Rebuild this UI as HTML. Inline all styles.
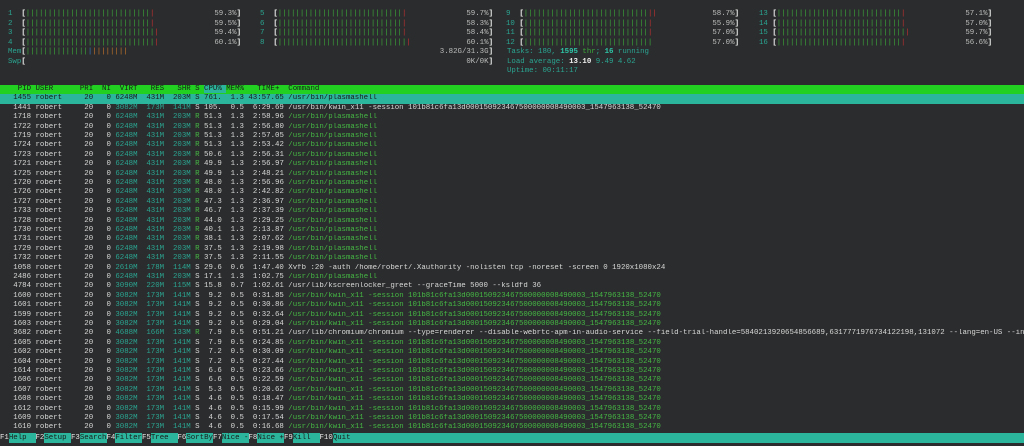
<!DOCTYPE html>
<html><head><meta charset="utf-8"><style>
html,body{margin:0;padding:0;}
body{width:1024px;height:446px;background:#2b2c2d;overflow:hidden;position:relative;font-family:"Liberation Mono",monospace;font-size:7.4px;color:#d8d8d8;}
.m{position:absolute;width:233px;height:9.5px;line-height:9.5px;white-space:pre;}
.m .p{position:absolute;right:0;top:0;color:#bdbdbd;}
.b{color:#f0f0f0;font-weight:bold;}
.l{color:#2aa592;}
.g{color:#3bab3b;}
.r{color:#c43030;}
.bl{color:#3a78c8;}
.o{color:#c8772a;}
.t{color:#2aa592;}
.gc{color:#45b845;}
.k{color:#f0f0f0;font-weight:bold;}
#tbl{position:absolute;left:0;top:85px;width:1024px;height:348px;overflow:hidden;}
#tbl div{position:absolute;left:0;width:1024px;height:9.4px;line-height:9.4px;white-space:pre;overflow:hidden;}
.hd{background:#22d022;color:#1a1a1a;}
.hd .s{background:#2bb59c;}
.sel{background:#2bb59c;color:#1a1a1a;}
#ft{position:absolute;left:0;top:433px;width:1024px;height:10px;line-height:10px;white-space:pre;display:flex;overflow:hidden;}
#ft .f{color:#e8e8e8;}
#ft .c{background:#2bb59c;color:#1a1a1a;}
</style></head><body>

<div class="m" style="left:8px;top:10.25px"><span class="l">1  </span><span class="b">[</span><span class="g">||||||||||||||||||||||||||||</span><span class="r">|</span><span class="p">59.3%<span class="b">]</span></span></div>
<div class="m" style="left:8px;top:19.75px"><span class="l">2  </span><span class="b">[</span><span class="g">||||||||||||||||||||||||||||</span><span class="r">|</span><span class="p">59.5%<span class="b">]</span></span></div>
<div class="m" style="left:8px;top:29.25px"><span class="l">3  </span><span class="b">[</span><span class="g">|||||||||||||||||||||||||||||</span><span class="r">|</span><span class="p">59.4%<span class="b">]</span></span></div>
<div class="m" style="left:8px;top:38.75px"><span class="l">4  </span><span class="b">[</span><span class="g">|||||||||||||||||||||||||||||</span><span class="r">|</span><span class="p">60.1%<span class="b">]</span></span></div>

<div class="m" style="left:260px;top:10.25px"><span class="l">5  </span><span class="b">[</span><span class="g">||||||||||||||||||||||||||||</span><span class="r">|</span><span class="p">59.7%<span class="b">]</span></span></div>
<div class="m" style="left:260px;top:19.75px"><span class="l">6  </span><span class="b">[</span><span class="g">||||||||||||||||||||||||||||</span><span class="r">|</span><span class="p">58.3%<span class="b">]</span></span></div>
<div class="m" style="left:260px;top:29.25px"><span class="l">7  </span><span class="b">[</span><span class="g">||||||||||||||||||||||||||||</span><span class="r">|</span><span class="p">58.4%<span class="b">]</span></span></div>
<div class="m" style="left:260px;top:38.75px"><span class="l">8  </span><span class="b">[</span><span class="g">|||||||||||||||||||||||||||||</span><span class="r">|</span><span class="p">60.1%<span class="b">]</span></span></div>

<div class="m" style="left:506px;top:10.25px"><span class="l">9  </span><span class="b">[</span><span class="g">||||||||||||||||||||||||||||</span><span class="r">||</span><span class="p">58.7%<span class="b">]</span></span></div>
<div class="m" style="left:506px;top:19.75px"><span class="l">10 </span><span class="b">[</span><span class="g">||||||||||||||||||||||||||||</span><span class="r">|</span><span class="p">55.9%<span class="b">]</span></span></div>
<div class="m" style="left:506px;top:29.25px"><span class="l">11 </span><span class="b">[</span><span class="g">||||||||||||||||||||||||||||</span><span class="r">|</span><span class="p">57.0%<span class="b">]</span></span></div>
<div class="m" style="left:506px;top:38.75px"><span class="l">12 </span><span class="b">[</span><span class="g">|||||||||||||||||||||||||||||</span><span class="p">57.0%<span class="b">]</span></span></div>

<div class="m" style="left:759px;top:10.25px"><span class="l">13 </span><span class="b">[</span><span class="g">||||||||||||||||||||||||||||</span><span class="r">|</span><span class="p">57.1%<span class="b">]</span></span></div>
<div class="m" style="left:759px;top:19.75px"><span class="l">14 </span><span class="b">[</span><span class="g">||||||||||||||||||||||||||||</span><span class="r">|</span><span class="p">57.0%<span class="b">]</span></span></div>
<div class="m" style="left:759px;top:29.25px"><span class="l">15 </span><span class="b">[</span><span class="g">|||||||||||||||||||||||||||||</span><span class="r">|</span><span class="p">59.7%<span class="b">]</span></span></div>
<div class="m" style="left:759px;top:38.75px"><span class="l">16 </span><span class="b">[</span><span class="g">||||||||||||||||||||||||||||</span><span class="r">|</span><span class="p">56.6%<span class="b">]</span></span></div>

<div class="m" style="left:8px;top:48.25px;width:485px"><span class="l">Mem</span><span class="b">[</span><span class="g">||||||||||||||</span><span class="bl">|</span><span class="o">||||||||</span><span class="p">3.82G/31.3G<span class="b">]</span></span></div>
<div class="m" style="left:8px;top:57.75px;width:485px"><span class="l">Swp</span><span class="b">[</span><span class="p">0K/0K<span class="b">]</span></span></div>

<div class="m" style="left:507px;top:48.25px;width:400px"><span class="t">Tasks: 180, </span><span class="k" style="color:#2ec4a6">1595</span><span class="g"> thr</span><span class="t">; </span><span class="k" style="color:#2ec4a6">16</span><span class="t"> running</span></div>
<div class="m" style="left:507px;top:57.75px;width:400px"><span class="t">Load average: </span><span class="k">13.10 </span><span class="t">9.49 4.62</span></div>
<div class="m" style="left:507px;top:67.25px;width:400px"><span class="t">Uptime: 00:11:17</span></div>

<div id="tbl">
<div class="hd" style="top:0px">    PID USER      PRI  NI  VIRT   RES   SHR S <span class="s">CPU% </span>MEM%   TIME+  Command</div>
<div class="sel" style="top:9.4px">   1455 robert     20   0 6248M  431M  203M S 761.  1.3 43:57.65 /usr/bin/plasmashell</div>
<div style="top:18.8px">   1441 robert     20   0 <span class="t">3082M  173M  141M</span> S 105.  0.5  6:29.69 /usr/bin/kwin_x11 -session 101b81c6fa13d000150923467500000008490003_1547963138_52470</div>
<div style="top:28.2px">   1718 robert     20   0 <span class="t">6248M  431M  203M</span> <span class="gc">R</span> 51.3  1.3  2:58.96 <span class="gc">/usr/bin/plasmashell</span></div>
<div style="top:37.6px">   1722 robert     20   0 <span class="t">6248M  431M  203M</span> <span class="gc">R</span> 51.3  1.3  2:56.80 <span class="gc">/usr/bin/plasmashell</span></div>
<div style="top:47px">   1719 robert     20   0 <span class="t">6248M  431M  203M</span> <span class="gc">R</span> 51.3  1.3  2:57.05 <span class="gc">/usr/bin/plasmashell</span></div>
<div style="top:56.4px">   1724 robert     20   0 <span class="t">6248M  431M  203M</span> <span class="gc">R</span> 51.3  1.3  2:53.42 <span class="gc">/usr/bin/plasmashell</span></div>
<div style="top:65.8px">   1723 robert     20   0 <span class="t">6248M  431M  203M</span> <span class="gc">R</span> 50.6  1.3  2:56.31 <span class="gc">/usr/bin/plasmashell</span></div>
<div style="top:75.2px">   1721 robert     20   0 <span class="t">6248M  431M  203M</span> <span class="gc">R</span> 49.9  1.3  2:56.97 <span class="gc">/usr/bin/plasmashell</span></div>
<div style="top:84.6px">   1725 robert     20   0 <span class="t">6248M  431M  203M</span> <span class="gc">R</span> 49.9  1.3  2:48.21 <span class="gc">/usr/bin/plasmashell</span></div>
<div style="top:94px">   1720 robert     20   0 <span class="t">6248M  431M  203M</span> <span class="gc">R</span> 48.0  1.3  2:56.96 <span class="gc">/usr/bin/plasmashell</span></div>
<div style="top:103.4px">   1726 robert     20   0 <span class="t">6248M  431M  203M</span> <span class="gc">R</span> 48.0  1.3  2:42.82 <span class="gc">/usr/bin/plasmashell</span></div>
<div style="top:112.8px">   1727 robert     20   0 <span class="t">6248M  431M  203M</span> <span class="gc">R</span> 47.3  1.3  2:36.97 <span class="gc">/usr/bin/plasmashell</span></div>
<div style="top:122.2px">   1733 robert     20   0 <span class="t">6248M  431M  203M</span> <span class="gc">R</span> 46.7  1.3  2:37.39 <span class="gc">/usr/bin/plasmashell</span></div>
<div style="top:131.6px">   1728 robert     20   0 <span class="t">6248M  431M  203M</span> <span class="gc">R</span> 44.0  1.3  2:29.25 <span class="gc">/usr/bin/plasmashell</span></div>
<div style="top:141px">   1730 robert     20   0 <span class="t">6248M  431M  203M</span> <span class="gc">R</span> 40.1  1.3  2:13.87 <span class="gc">/usr/bin/plasmashell</span></div>
<div style="top:150.4px">   1731 robert     20   0 <span class="t">6248M  431M  203M</span> <span class="gc">R</span> 38.1  1.3  2:07.62 <span class="gc">/usr/bin/plasmashell</span></div>
<div style="top:159.8px">   1729 robert     20   0 <span class="t">6248M  431M  203M</span> <span class="gc">R</span> 37.5  1.3  2:19.98 <span class="gc">/usr/bin/plasmashell</span></div>
<div style="top:169.2px">   1732 robert     20   0 <span class="t">6248M  431M  203M</span> <span class="gc">R</span> 37.5  1.3  2:11.55 <span class="gc">/usr/bin/plasmashell</span></div>
<div style="top:178.6px">   1058 robert     20   0 <span class="t">2610M  178M  114M</span> S 29.6  0.6  1:47.40 Xvfb :20 -auth /home/robert/.Xauthority -nolisten tcp -noreset -screen 0 1920x1080x24</div>
<div style="top:188px">   2486 robert     20   0 <span class="t">6248M  431M  203M</span> S 17.1  1.3  1:02.75 <span class="gc">/usr/bin/plasmashell</span></div>
<div style="top:197.4px">   4784 robert     20   0 <span class="t">3090M  220M  115M</span> S 15.8  0.7  1:02.61 /usr/lib/kscreenlocker_greet --graceTime 5000 --ksldfd 36</div>
<div style="top:206.8px">   1600 robert     20   0 <span class="t">3082M  173M  141M</span> S  9.2  0.5  0:31.85 <span class="gc">/usr/bin/kwin_x11 -session 101b81c6fa13d000150923467500000008490003_1547963138_52470</span></div>
<div style="top:216.2px">   1601 robert     20   0 <span class="t">3082M  173M  141M</span> S  9.2  0.5  0:30.86 <span class="gc">/usr/bin/kwin_x11 -session 101b81c6fa13d000150923467500000008490003_1547963138_52470</span></div>
<div style="top:225.6px">   1599 robert     20   0 <span class="t">3082M  173M  141M</span> S  9.2  0.5  0:32.64 <span class="gc">/usr/bin/kwin_x11 -session 101b81c6fa13d000150923467500000008490003_1547963138_52470</span></div>
<div style="top:235px">   1603 robert     20   0 <span class="t">3082M  173M  141M</span> S  9.2  0.5  0:29.04 <span class="gc">/usr/bin/kwin_x11 -session 101b81c6fa13d000150923467500000008490003_1547963138_52470</span></div>
<div style="top:244.4px">   3682 robert     20   0 <span class="t">4688M  166M  133M</span> <span class="gc">R</span>  7.9  0.5  0:51.21 /usr/lib/chromium/chromium --type=renderer --disable-webrtc-apm-in-audio-service --field-trial-handle=5840213920654856689,6317771976734122198,131072 --lang=en-US --in</div>
<div style="top:253.8px">   1605 robert     20   0 <span class="t">3082M  173M  141M</span> S  7.9  0.5  0:24.85 <span class="gc">/usr/bin/kwin_x11 -session 101b81c6fa13d000150923467500000008490003_1547963138_52470</span></div>
<div style="top:263.2px">   1602 robert     20   0 <span class="t">3082M  173M  141M</span> S  7.2  0.5  0:30.09 <span class="gc">/usr/bin/kwin_x11 -session 101b81c6fa13d000150923467500000008490003_1547963138_52470</span></div>
<div style="top:272.6px">   1604 robert     20   0 <span class="t">3082M  173M  141M</span> S  7.2  0.5  0:27.44 <span class="gc">/usr/bin/kwin_x11 -session 101b81c6fa13d000150923467500000008490003_1547963138_52470</span></div>
<div style="top:282px">   1614 robert     20   0 <span class="t">3082M  173M  141M</span> S  6.6  0.5  0:23.66 <span class="gc">/usr/bin/kwin_x11 -session 101b81c6fa13d000150923467500000008490003_1547963138_52470</span></div>
<div style="top:291.4px">   1606 robert     20   0 <span class="t">3082M  173M  141M</span> S  6.6  0.5  0:22.59 <span class="gc">/usr/bin/kwin_x11 -session 101b81c6fa13d000150923467500000008490003_1547963138_52470</span></div>
<div style="top:300.8px">   1607 robert     20   0 <span class="t">3082M  173M  141M</span> S  5.3  0.5  0:20.62 <span class="gc">/usr/bin/kwin_x11 -session 101b81c6fa13d000150923467500000008490003_1547963138_52470</span></div>
<div style="top:310.2px">   1608 robert     20   0 <span class="t">3082M  173M  141M</span> S  4.6  0.5  0:18.47 <span class="gc">/usr/bin/kwin_x11 -session 101b81c6fa13d000150923467500000008490003_1547963138_52470</span></div>
<div style="top:319.6px">   1612 robert     20   0 <span class="t">3082M  173M  141M</span> S  4.6  0.5  0:15.99 <span class="gc">/usr/bin/kwin_x11 -session 101b81c6fa13d000150923467500000008490003_1547963138_52470</span></div>
<div style="top:329px">   1609 robert     20   0 <span class="t">3082M  173M  141M</span> S  4.6  0.5  0:17.54 <span class="gc">/usr/bin/kwin_x11 -session 101b81c6fa13d000150923467500000008490003_1547963138_52470</span></div>
<div style="top:338.4px">   1610 robert     20   0 <span class="t">3082M  173M  141M</span> S  4.6  0.5  0:16.68 <span class="gc">/usr/bin/kwin_x11 -session 101b81c6fa13d000150923467500000008490003_1547963138_52470</span></div>
</div>

<div id="ft"><span class="f">F1</span><span class="c">Help  </span><span class="f">F2</span><span class="c">Setup </span><span class="f">F3</span><span class="c">Search</span><span class="f">F4</span><span class="c">Filter</span><span class="f">F5</span><span class="c">Tree  </span><span class="f">F6</span><span class="c">SortBy</span><span class="f">F7</span><span class="c">Nice -</span><span class="f">F8</span><span class="c">Nice +</span><span class="f">F9</span><span class="c">Kill  </span><span class="f">F10</span><span class="c" style="flex:1">Quit</span></div>

</body></html>
